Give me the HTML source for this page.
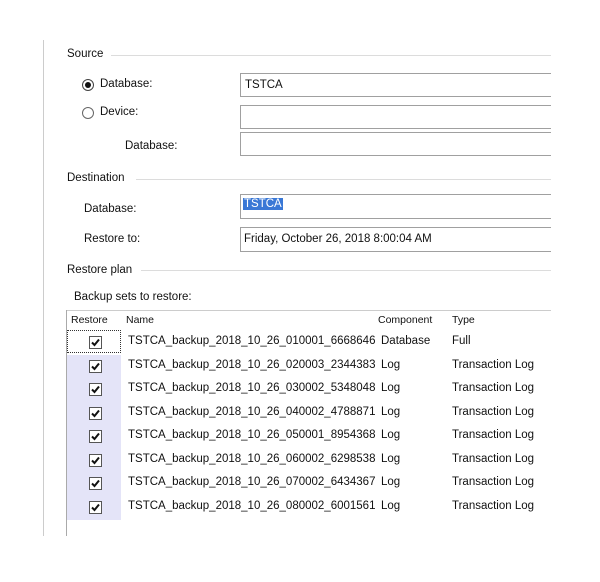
<!DOCTYPE html>
<html><head><style>
body{margin:0;width:600px;height:582px;background:#fff;position:relative;overflow:hidden;font-family:"Liberation Sans",sans-serif;font-size:11.5px;color:#111}
.a{position:absolute;white-space:nowrap}
.hl{position:absolute;height:1px;background:#dcdcdc}
.tb{position:absolute;left:240px;width:312px;border:1px solid #a0a0a0;border-right:none;background:#fff}
.cb{position:absolute;left:89px;width:11px;height:11px;border:1px solid #555;background:#fff}
.cb svg{position:absolute;left:1px;top:1px}
.bg{position:absolute;left:67px;width:54px;height:24px;background:#e4e4f8}
</style></head><body>
<div style="position:absolute;left:43px;top:40px;width:1px;height:496px;background:#ccc"></div>
<div class="a" style="left:67px;top:48px">Source</div>
<div class="hl" style="left:111px;top:55px;width:440px"></div>
<div class="a" style="left:82px;top:79px;width:10px;height:10px;border:1px solid #444;border-radius:50%"></div>
<div class="a" style="left:85px;top:82px;width:6px;height:6px;background:#111;border-radius:50%"></div>
<div class="a" style="left:100px;top:78px">Database:</div>
<div class="tb" style="top:73px;height:22px"><span class="a" style="left:4px;top:5px">TSTCA</span></div>
<div class="a" style="left:82px;top:107px;width:10px;height:10px;border:1px solid #666;border-radius:50%"></div>
<div class="a" style="left:100px;top:106px">Device:</div>
<div class="tb" style="top:105px;height:22px"></div>
<div class="a" style="left:125px;top:140px">Database:</div>
<div class="tb" style="top:132px;height:22px"></div>
<div class="a" style="left:67px;top:172px">Destination</div>
<div class="hl" style="left:136px;top:179px;width:415px"></div>
<div class="a" style="left:84px;top:203px">Database:</div>
<div class="tb" style="top:194px;height:23px"><span class="a" style="left:2px;top:3px;background:#3a78d6;color:#fff;padding:0 1px">TSTCA</span></div>
<div class="a" style="left:84px;top:233px">Restore to:</div>
<div class="tb" style="top:227px;height:23px"><span class="a" style="left:3px;top:5px">Friday, October 26, 2018 8:00:04 AM</span></div>
<div class="a" style="left:67px;top:264px">Restore plan</div>
<div class="hl" style="left:141px;top:270px;width:410px"></div>
<div class="a" style="left:74px;top:291px">Backup sets to restore:</div>
<div style="position:absolute;left:66px;top:310px;width:490px;height:1px;background:#ccc"></div>
<div style="position:absolute;left:66px;top:310px;width:1px;height:226px;background:#aaa"></div>
<div class="a" style="left:71px;top:314px;font-size:10.5px">Restore</div>
<div class="a" style="left:126px;top:314px;font-size:10.5px">Name</div>
<div class="a" style="left:378px;top:314px;font-size:10.5px">Component</div>
<div class="a" style="left:452px;top:314px;font-size:10.5px">Type</div>
<div style="position:absolute;left:67px;top:330px;width:52px;height:21px;border:1px dotted #333"></div>
<div id="rows"></div>
<script>
var r=[["010001_6668646","Database","Full"],["020003_2344383","Log","Transaction Log"],["030002_5348048","Log","Transaction Log"],["040002_4788871","Log","Transaction Log"],["050001_8954368","Log","Transaction Log"],["060002_6298538","Log","Transaction Log"],["070002_6434367","Log","Transaction Log"],["080002_6001561","Log","Transaction Log"]];
var h="";
r.forEach(function(x,i){var t=Math.round(331+i*23.5);
if(i>0)h+='<div class="bg" style="top:'+(t)+'px"></div>';
h+='<div class="cb" style="top:'+(t+5)+'px"><svg width="9" height="9"><path d="M1 4.5L3.5 7L8 1.5" stroke="#111" stroke-width="2" fill="none"/></svg></div>';
h+='<div class="a" style="left:128px;top:'+(t+4)+'px">TSTCA_backup_2018_10_26_'+x[0]+'</div>';
h+='<div class="a" style="left:381px;top:'+(t+4)+'px">'+x[1]+'</div>';
h+='<div class="a" style="left:452px;top:'+(t+4)+'px">'+x[2]+'</div>';});
document.getElementById("rows").innerHTML=h;
</script>
<div style="position:absolute;left:551px;top:0;width:49px;height:582px;background:#fff"></div>
</body></html>
